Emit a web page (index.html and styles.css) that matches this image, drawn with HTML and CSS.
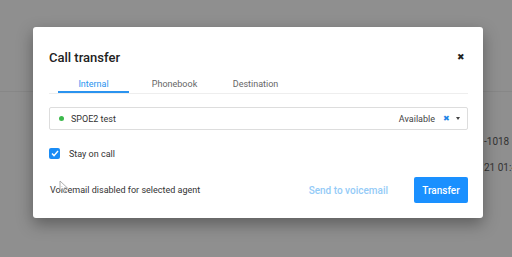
FILE: index.html
```html
<!DOCTYPE html>
<html lang="en">
<head>
    <meta charset="UTF-8">
    <meta name="viewport" content="width=device-width, initial-scale=1.0">
    <title>Call transfer</title>
    <link rel="stylesheet" href="styles.css">
</head>
<body>
    <div class="page">
        <div class="page-top"></div>
        <div class="page-table">
            <div class="page-row">-1018</div>
            <div class="page-row">21 01:4</div>
        </div>
    </div>

    <div class="modal">
        <div class="modal-header">
            <h2>Call transfer</h2>
            <span class="close">&#x2716;</span>
        </div>

        <div class="tabs">
            <div class="tab active">Internal</div>
            <div class="tab">Phonebook</div>
            <div class="tab">Destination</div>
        </div>

        <div class="select">
            <span class="dot"></span>
            <span class="agent">SPOE2 test</span>
            <span class="status">Available</span>
            <span class="clear">&#x2716;</span>
            <span class="caret"></span>
        </div>

        <label class="check">
            <span class="box">
                <svg width="8" height="7" viewBox="0 0 8 7"><path d="M1 3.6 L3 5.6 L7 1" fill="none" stroke="#fff" stroke-width="1.4"/></svg>
            </span>
            Stay on call
        </label>

        <div class="footer">
            <span class="note">Voicemail disabled for selected agent</span>
            <button class="link-btn">Send to voicemail</button>
            <button class="primary">Transfer</button>
        </div>

        <svg class="cursor" width="10" height="14" viewBox="0 0 10 14"><path d="M1 1 L1 11 L3.5 8.6 L5.4 12.6 L6.8 12 L5 8 L8.5 8 Z" fill="rgba(255,255,255,0.6)" stroke="#9a9a9a" stroke-width="0.8"/></svg>
    </div>
</body>
</html>
```

FILE: styles.css
```css
body {
    margin: 0;
    width: 512px;
    height: 257px;
    overflow: hidden;
    background-color: #8f8f8f;
    font-family: Roboto, "Liberation Sans", sans-serif;
    position: relative;
}

.page {
    display: flex;
    flex-direction: column;
}

.page-top {
    height: 91px;
    border-bottom: 1px solid #878787;
}

.page-table {
    display: flex;
    flex-direction: column;
    padding-top: 44px;
    padding-left: 484px;
}

.page-row {
    height: 26px;
    font-size: 10px;
    color: #333;
    white-space: nowrap;
}

.modal {
    position: absolute;
    left: 33px;
    top: 27px;
    width: 450px;
    height: 191px;
    box-sizing: border-box;
    padding: 0 15px 0 16px;
    background: #fff;
    border-radius: 3px;
    box-shadow: 0 6px 16px rgba(0, 0, 0, 0.35);
}

.modal-header {
    display: flex;
    justify-content: space-between;
    align-items: center;
    height: 30px;
    margin-top: 15px;
}

h2 {
    margin: 0;
    font-size: 13px;
    font-weight: 500;
    color: #222;
}

.close {
    font-size: 8.5px;
    color: #222;
    margin-right: 3px;
}

.tabs {
    display: flex;
    padding-left: 9px;
    border-bottom: 1px solid #eeeeee;
    height: 16px;
    margin-top: 5px;
}

.tab {
    width: 71px;
    text-align: center;
    font-size: 9px;
    color: #666;
    line-height: 15px;
    margin-right: 10px;
}

.tab.active {
    color: #2a93ef;
    border-bottom: 2px solid #2a93ef;
}

.select {
    display: flex;
    align-items: center;
    margin-top: 13px;
    height: 21px;
    border: 1px solid #ddd;
    border-radius: 2px;
    padding: 0 7px 0 9px;
    font-size: 9px;
    color: #333;
}

.dot {
    width: 5px;
    height: 5px;
    border-radius: 50%;
    background: #3cb94c;
    margin-right: 7px;
}

.agent {
    flex: 1;
}

.status {
    color: #444;
    margin-right: 8px;
}

.clear {
    color: #1f85e6;
    font-size: 8px;
    margin-right: 6px;
}

.caret {
    width: 0;
    height: 0;
    border-left: 2.5px solid transparent;
    border-right: 2.5px solid transparent;
    border-top: 3px solid #444;
}

.check {
    display: flex;
    align-items: center;
    margin-top: 18px;
    font-size: 9px;
    color: #333;
}

.box {
    width: 11px;
    height: 11px;
    border-radius: 2px;
    background: #1a8cf5;
    display: flex;
    align-items: center;
    justify-content: center;
    margin-right: 9px;
}

.footer {
    display: flex;
    align-items: center;
    margin-top: 18px;
}

.note {
    flex: 1;
    font-size: 9px;
    color: #333;
    padding-left: 1px;
}

button {
    font-family: inherit;
    font-size: 10px;
    font-weight: 500;
    border: none;
    cursor: pointer;
}

.link-btn {
    background: none;
    color: #94cbf7;
    margin-right: 20px;
}

.primary {
    width: 54px;
    height: 26px;
    background: #1a90ff;
    color: #fff;
    border-radius: 2px;
}

.cursor {
    position: absolute;
    left: 26px;
    top: 153px;
}
```
